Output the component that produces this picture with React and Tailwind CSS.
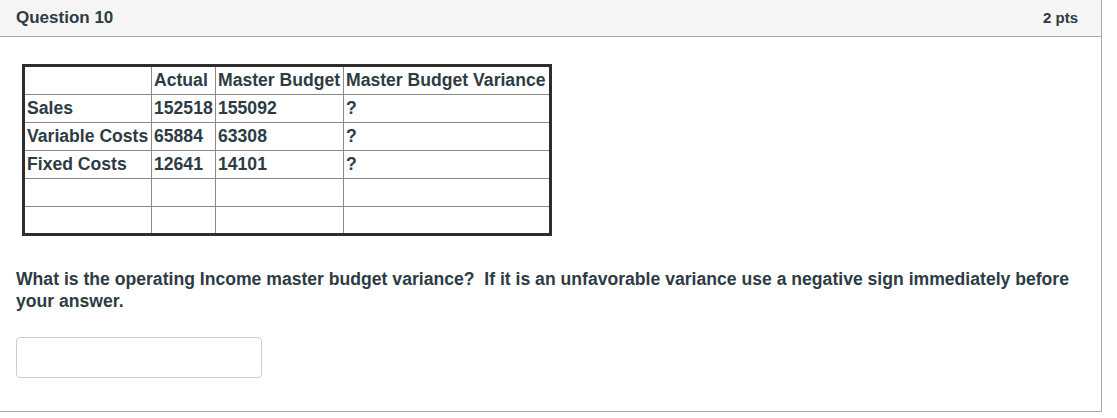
export default function App() {
  const font = { fontFamily: '"Liberation Sans", Arial, sans-serif' };
  const rows = [
    ["", "Actual", "Master Budget", "Master Budget Variance"],
    ["Sales", "152518", "155092", "?"],
    ["Variable Costs", "65884", "63308", "?"],
    ["Fixed Costs", "12641", "14101", "?"],
    ["", "", "", ""],
    ["", "", "", ""],
  ];
  const widths = ["w-[127px]", "w-[64px]", "w-[128px]", "w-[205px]"];
  return (
    <div className="bg-white w-[1117px] h-[418px]" style={font}>
      <div className="w-[1102px] h-[412px] border-r border-b border-[#a9a9a9] flex flex-col">
        <div className="h-[37px] bg-[#f5f5f5] border-b border-[#a9a9a9] flex items-center justify-between pl-4 pr-[23px] text-[#2d3b45] font-bold">
          <span className="text-[17px]">Question 10</span>
          <span className="text-[15px]">2 pts</span>
        </div>
        <div className="pt-[27px] pl-[22px]">
          <table className="border-separate border-spacing-0 border-[3px] border-[#2e2e2e] text-[17.6px] font-bold text-[#2d3b45] leading-none">
            <tbody>
              {rows.map((r, i) => (
                <tr key={i} className={i === 5 ? "h-[26px]" : "h-[28px]"}>
                  {r.map((c, j) => (
                    <td
                      key={j}
                      className={`${widths[j]} p-0 pl-[2px] align-middle whitespace-nowrap border-[#8a8a8a] ${j < 3 ? "border-r" : ""} ${i < 5 ? "border-b" : ""}`}
                    >
                      {c}
                    </td>
                  ))}
                </tr>
              ))}
            </tbody>
          </table>
        </div>
        <div className="pl-4 pr-6 pt-[32px] text-[17.6px] leading-[22px] font-bold text-[#2d3b45]">
          What is the operating Income master budget variance?&nbsp; If it is an unfavorable variance use a negative sign immediately before your answer.
        </div>
        <div className="pl-4 pt-[25px]">
          <div className="w-[246px] h-[41px] border border-[#cccccc] rounded-[4px] bg-white"></div>
        </div>
      </div>
    </div>
  );
}
